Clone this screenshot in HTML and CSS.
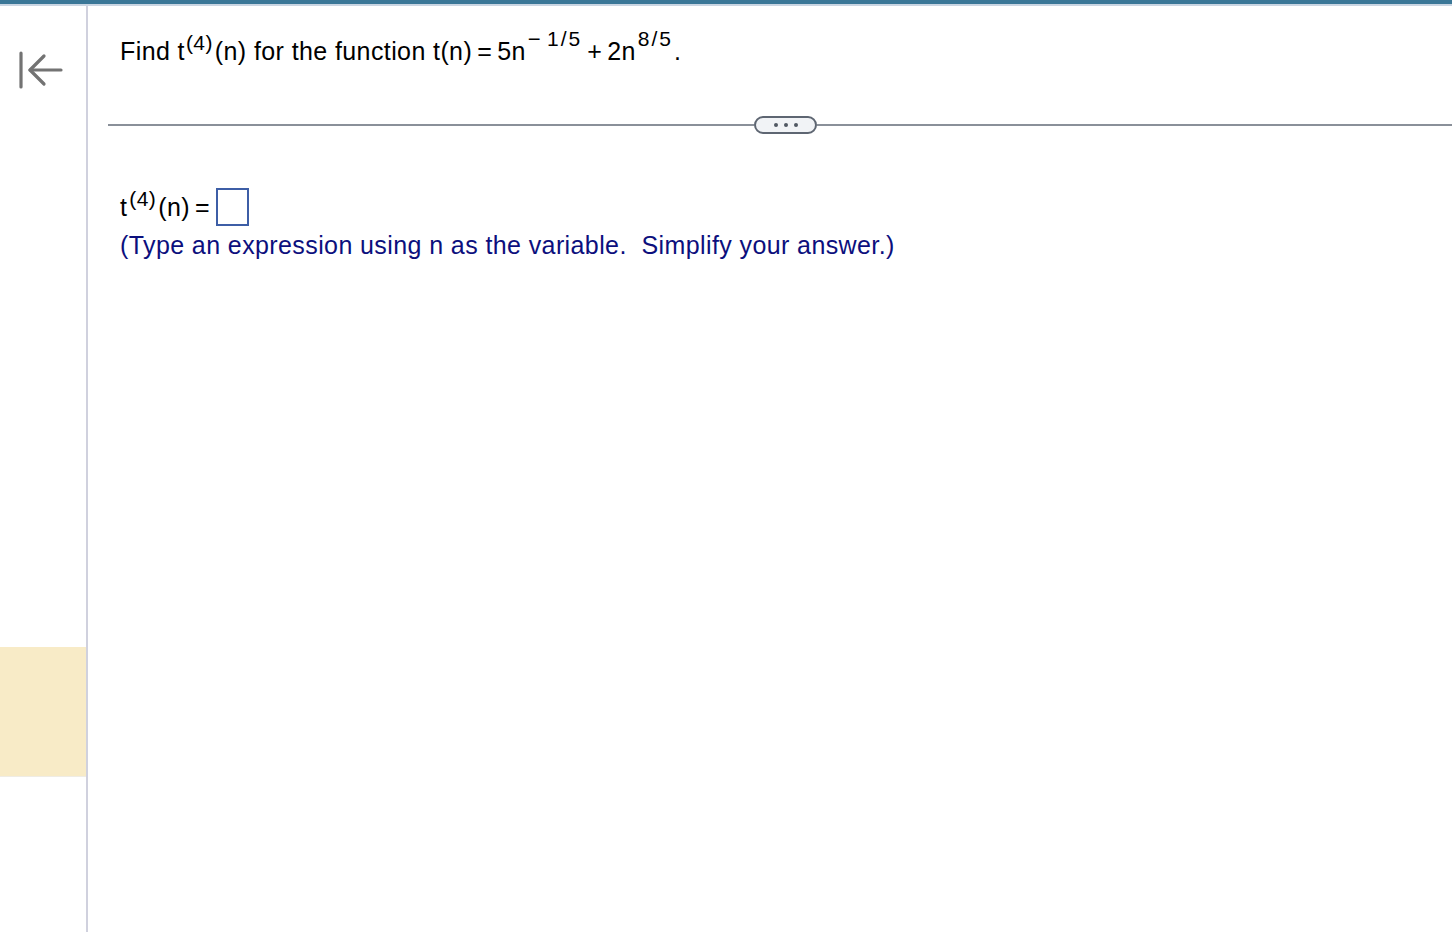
FILE: index.html
```html
<!DOCTYPE html>
<html>
<head>
<meta charset="utf-8">
<link rel="stylesheet" href="styles.css">
</head>
<body>
<div class="topbar"></div>
<div class="topline"></div>
<div class="layout">
  <aside class="sidebar">
    <div class="collapse">
      <svg width="48" height="42" viewBox="0 0 48 42">
        <line x1="5" y1="4" x2="5" y2="38" stroke="#737373" stroke-width="3.2" stroke-linecap="round"/>
        <line x1="14" y1="21" x2="45" y2="21" stroke="#737373" stroke-width="3.2" stroke-linecap="round"/>
        <polyline points="28,7 14,21 28,35" fill="none" stroke="#737373" stroke-width="3.2" stroke-linecap="round" stroke-linejoin="round"/>
      </svg>
    </div>
    <div class="highlight"></div>
  </aside>
  <main class="main">
    <div class="question">Find t<sup class="sp">(4)</sup>(n) for the function t(n)<span class="eq">=</span>5n<sup class="sp2"><span class="minus">&minus;</span>1/5</sup><span class="plus">+</span>2n<sup class="sp2">8/5</sup><span class="dotend">.</span></div>
    <div class="divider">
      <div class="rule"></div>
      <button class="more"><span class="dot"></span><span class="dot"></span><span class="dot"></span></button>
      <div class="rule"></div>
    </div>
    <div class="answer">
      <div class="answer-line"><span class="expr">t<sup class="sp">(4)</sup>(n)<span class="eq">=</span></span><span class="box"></span></div>
      <div class="hint">(Type an expression using n as the variable.&nbsp; Simplify your answer.)</div>
    </div>
  </main>
</div>
</body>
</html>
```
FILE: styles.css
```css
html, body {
  margin: 0;
  padding: 0;
  background: #ffffff;
  font-family: "Liberation Sans", Arial, sans-serif;
}
.topbar {
  height: 4px;
  background: #3a7797;
}
.topline {
  height: 2px;
  background: #c9d5e2;
}
.layout {
  display: flex;
  height: 926px;
}
.sidebar {
  width: 86px;
  flex: none;
  border-right: 2px solid #d0d1de;
  display: flex;
  flex-direction: column;
}
.collapse {
  padding: 43px 0 0 16px;
  height: 42px;
}
.collapse svg {
  display: block;
}
.highlight {
  margin-top: 556px;
  height: 129px;
  background: #f8ebc7;
  border-bottom: 1px solid #efece4;
}
.main {
  flex: 1;
  padding-left: 20px;
  overflow: hidden;
}
.question {
  padding: 29px 0 0 12px;
  font-size: 25px;
  line-height: 32px;
  height: 32px;
  letter-spacing: 0.4px;
  color: #000;
  white-space: nowrap;
}
sup.sp {
  font-size: 21px;
  vertical-align: 10px;
  line-height: 0;
  margin-left: 1px;
  margin-right: 2px;
}
sup.sp2 {
  font-size: 21px;
  vertical-align: 14px;
  line-height: 0;
  letter-spacing: 2px;
  margin-left: 2px;
}
.minus {
  display: inline-block;
  transform: scaleX(1.05);
  margin-right: 5px;
  margin-left: 0;
}
.plus {
  margin: 0 5px 0 5px;
}
.dotend {
  margin-left: 1px;
}
.eq {
  margin: 0 5px;
}
.divider {
  display: flex;
  align-items: center;
  margin-top: 49px;
  height: 18px;
}
.rule {
  flex: 1;
  height: 2px;
  background: #8a9099;
}
.rule:first-child {
  flex: none;
  width: 646px;
}
.more {
  width: 63px;
  height: 18px;
  box-sizing: border-box;
  border: 2px solid #5e6672;
  border-radius: 9px;
  background: #f1f3f6;
  padding: 0;
  display: flex;
  align-items: center;
  justify-content: center;
  gap: 6px;
}
.dot {
  width: 4px;
  height: 4px;
  border-radius: 50%;
  background: #505862;
}
.answer {
  padding: 54px 0 0 12px;
}
.answer-line {
  display: flex;
  align-items: flex-end;
  height: 38px;
  color: #000;
}
.expr {
  font-size: 25px;
  line-height: 30px;
  letter-spacing: 0.4px;
  margin-bottom: 4px;
  white-space: nowrap;
}
.expr .sp {
  margin-left: 2px;
  margin-right: 2px;
}
.expr .eq {
  margin: 0 6px 0 5px;
}
.box {
  display: block;
  width: 29px;
  height: 34px;
  border: 2px solid #3d5ea6;
}
.hint {
  margin-top: 3px;
  font-size: 25px;
  line-height: 32px;
  letter-spacing: 0.4px;
  color: #0c0f7d;
  white-space: nowrap;
}
```
